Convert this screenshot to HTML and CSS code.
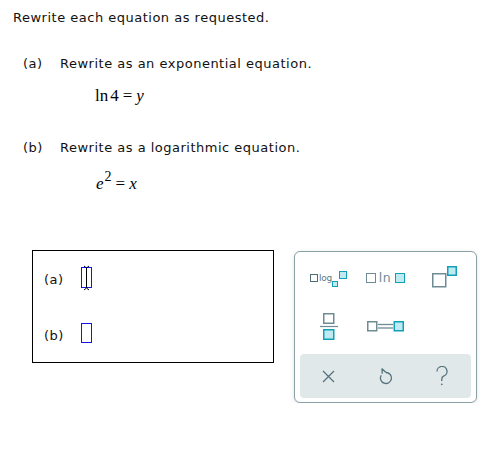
FILE: index.html
```html
<!DOCTYPE html>
<html>
<head>
<meta charset="utf-8">
<link rel="stylesheet" href="styles.css">
</head>
<body>
<div class="page">
  <p class="intro">Rewrite each equation as requested.</p>
  <p class="part part-a"><span class="tag">(a)</span><span>Rewrite as an exponential equation.</span></p>
  <p class="math math-a"><span class="fn">ln</span><span class="num">4</span><span class="eq">=</span><i>y</i></p>
  <p class="part part-b"><span class="tag">(b)</span><span>Rewrite as a logarithmic equation.</span></p>
  <p class="math math-b"><i>e</i><sup>2</sup><span class="eq">=</span><i>x</i></p>

  <div class="work">
    <div class="answer">
      <div class="arow row-a">
        <span class="alabel">(a)</span>
        <span class="slot">
          <svg class="cursor" width="7" height="26" viewBox="0 0 7 26"><path d="M1 1 L3.5 3 L6 1 M3.5 3 V23 M1 25 L3.5 23 L6 25" fill="none" stroke="#000" stroke-width="1"/></svg>
        </span>
      </div>
      <div class="arow row-b">
        <span class="alabel">(b)</span>
        <span class="slot"></span>
      </div>
    </div>

    <div class="palette">
      <div class="keys">
        <div class="key">
          <span class="sq sq-grey sq-7"></span><span class="kt kt-log">log</span><span class="sq sq-teal sq-5 sub"></span><span class="sq sq-teal sq-7 sup"></span>
        </div>
        <div class="key">
          <span class="sq sq-grey2 sq-10"></span><span class="kt kt-ln">ln</span><span class="sq sq-teal2 sq-10"></span>
        </div>
        <div class="key key-pow">
          <svg width="25" height="22" viewBox="0 0 25 22">
            <rect x="0.75" y="7.75" width="13" height="13" fill="#fff" stroke="#6f8c94" stroke-width="1.5"/>
            <rect x="15.75" y="0.75" width="8.5" height="8.5" fill="#bfeaf1" stroke="#139fb6" stroke-width="1.5"/>
          </svg>
        </div>
        <div class="key">
          <svg width="18" height="27" viewBox="0 0 18 27">
            <rect x="3.75" y="0.75" width="10" height="9.5" fill="#fff" stroke="#6f8c94" stroke-width="1.5"/>
            <line x1="0" y1="13.5" x2="18" y2="13.5" stroke="#6f8c94" stroke-width="1.2"/>
            <rect x="3.75" y="16.75" width="10" height="9.5" fill="#bfeaf1" stroke="#139fb6" stroke-width="1.5"/>
          </svg>
        </div>
        <div class="key">
          <svg width="37" height="11" viewBox="0 0 37 11">
            <rect x="0.75" y="0.75" width="9" height="9" fill="#fff" stroke="#6f8c94" stroke-width="1.5"/>
            <line x1="11" y1="3.5" x2="26" y2="3.5" stroke="#6f8c94" stroke-width="1.3"/>
            <line x1="11" y1="7" x2="26" y2="7" stroke="#6f8c94" stroke-width="1.3"/>
            <rect x="27.25" y="0.75" width="9" height="9" fill="#bfeaf1" stroke="#139fb6" stroke-width="1.5"/>
          </svg>
        </div>
        <div class="key"></div>
      </div>
      <div class="bar">
        <div class="tool">
          <svg width="13" height="13" viewBox="0 0 13 13"><path d="M1 1 L12 12 M12 1 L1 12" stroke="#55737c" stroke-width="1.3" fill="none"/></svg>
        </div>
        <div class="tool">
          <svg width="14" height="18" viewBox="0 0 14 18"><path d="M7 5.5 A5.5 5.5 0 1 1 2.2 8.3" fill="none" stroke="#55737c" stroke-width="1.3"/><path d="M3.2 6.8 L3 1.8 L7 5.5" fill="none" stroke="#55737c" stroke-width="1.3" stroke-linejoin="round"/></svg>
        </div>
        <div class="tool tool-help">
          <svg width="12" height="20" viewBox="0 0 12 20"><path d="M1 5.5 A5 5 0 1 1 7.5 10.2 C6.3 10.8 5.8 11.6 5.8 13 V15" fill="none" stroke="#55737c" stroke-width="1.3"/><circle cx="5.8" cy="18.3" r="0.9" fill="#55737c"/></svg>
        </div>
      </div>
    </div>
  </div>
</div>
</body>
</html>
```

FILE: styles.css
```css
html, body {
  margin: 0;
  padding: 0;
  background: #fff;
}
.page {
  padding: 0 13px;
  font-family: "DejaVu Sans", Verdana, sans-serif;
  font-size: 13px;
  line-height: 16px;
  letter-spacing: 0.5px;
  color: #111;
}
.intro {
  margin: 10px 0 0;
}
.part {
  margin: 0;
  padding-left: 10px;
  display: flex;
}
.part .tag {
  width: 37px;
}
.part-a {
  margin-top: 30px;
}
.part-b {
  margin-top: 34px;
}
.math {
  margin: 0;
  font-family: "Liberation Serif", "Times New Roman", serif;
  font-size: 17px;
  line-height: 20px;
  letter-spacing: 0;
  color: #000;
}
.math i {
  font-family: "Liberation Serif", "Times New Roman", serif;
  font-style: italic;
}
.math-a {
  margin-top: 14px;
  padding-left: 82px;
}
.math-a .num {
  margin-left: 2px;
}
.math-a .eq {
  margin: 0 5px;
}
.math-b {
  margin-top: 18px;
  padding-left: 83px;
}
.math sup {
  font-size: 14px;
  line-height: 0;
  vertical-align: 8px;
  margin-left: 1px;
}
.math .eq {
  margin: 0 4px;
}
.work {
  display: flex;
  align-items: flex-start;
  margin-top: 56px;
  padding-left: 19px;
  gap: 20px;
}
.answer {
  border: 1px solid #000;
  padding: 16px 0 0 11px;
  box-sizing: border-box;
  height: 113px;
  width: 242px;
}
.arow {
  display: flex;
  align-items: flex-start;
  height: 21px;
}
.row-b {
  margin-top: 35px;
  height: 20px;
}
.alabel {
  width: 37px;
  padding-top: 5px;
  color: #111;
}
.slot {
  position: relative;
  width: 11px;
  height: 100%;
  border: 1px solid #1515e6;
  box-sizing: border-box;
}
.cursor {
  position: absolute;
  left: 1px;
  top: -3px;
}
.palette {
  margin-top: 1px;
  width: 183px;
  height: 152px;
  box-sizing: border-box;
  border: 1px solid #8aa1a8;
  border-radius: 6px;
  box-shadow: 0 1px 4px rgba(0, 0, 0, 0.12);
  padding: 6px 5px 4px;
  display: flex;
  flex-direction: column;
  gap: 8px;
  background: #fff;
  letter-spacing: 0;
}
.keys {
  display: grid;
  grid-template-columns: repeat(3, 1fr);
  grid-template-rows: 40px 40px;
  row-gap: 8px;
}
.key {
  display: flex;
  align-items: center;
  justify-content: center;
}
.key svg {
  display: block;
}
.key-pow svg {
  margin-left: 3px;
  margin-top: -3px;
}
.sq {
  display: block;
  box-sizing: border-box;
  flex: none;
}
.sq-grey {
  border: 1px solid #4f6d76;
  background: #fff;
}
.sq-grey2 {
  border: 1.5px solid #6f8c94;
  background: #fff;
}
.sq-teal {
  border: 1px solid #139fb6;
  background: #bfeaf1;
}
.sq-teal2 {
  border: 1.5px solid #139fb6;
  background: #bfeaf1;
}
.sq-7 {
  width: 8px;
  height: 8px;
}
.sq-5 {
  width: 6px;
  height: 6px;
}
.sq-10 {
  width: 10px;
  height: 10px;
}
.sub {
  margin-top: 11px;
  margin-left: 0;
}
.sup {
  margin-top: -6px;
  margin-left: 1px;
  border-width: 1.5px;
}
.kt {
  font-family: "DejaVu Sans", sans-serif;
  color: #5b7780;
  display: block;
}
.kt-log {
  font-size: 9px;
  line-height: 10px;
  margin-left: 1px;
  letter-spacing: -0.2px;
}
.kt-ln {
  font-size: 12.5px;
  line-height: 12px;
  color: #6f8c94;
  margin: 0 4px 0 3px;
  letter-spacing: 0.5px;
}
.bar {
  height: 44px;
  background: #e1e8ea;
  border-radius: 4px;
  display: grid;
  grid-template-columns: repeat(3, 1fr);
  align-items: center;
}
.tool {
  display: flex;
  justify-content: center;
  align-items: center;
}
.tool-help svg {
  margin-right: 2px;
}
.tool svg {
  display: block;
}
```
